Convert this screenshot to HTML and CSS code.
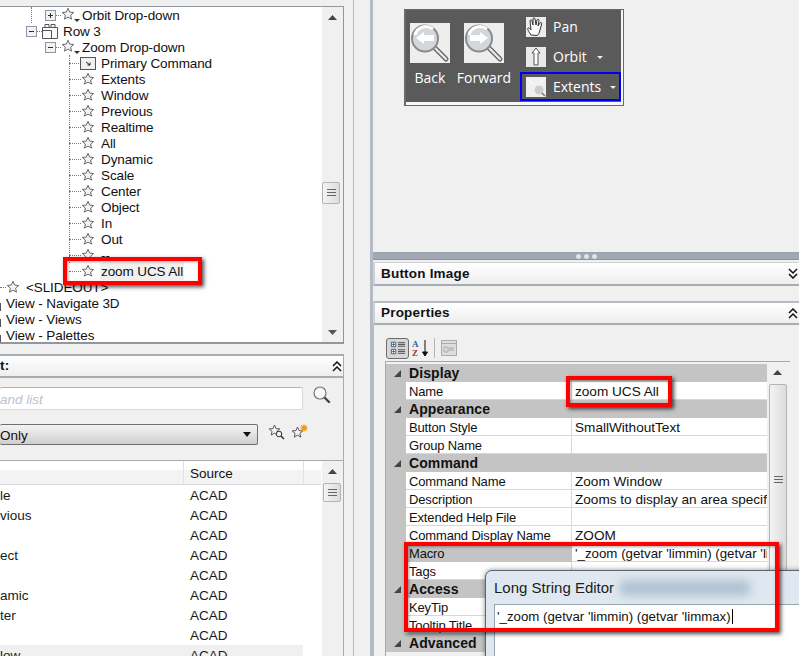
FILE: index.html
```html
<!DOCTYPE html>
<html lang="en">
<head>
<meta charset="utf-8">
<title>Customize User Interface</title>
<link rel="stylesheet" href="styles.css">
</head>
<body>
<svg class="defs" width="0" height="0" aria-hidden="true">
  <defs>
    <symbol id="star" viewBox="0 0 16 16"><path d="M8 1.500l1.900 4.300 4.600.5-3.500 3 1 4.600L8 11.500l-4 2.400 1-4.600-3.500-3 4.600-.5z" fill="#f4f4f4" stroke="#555" stroke-width="1"/></symbol>
    <symbol id="chev-up" viewBox="0 0 10 11"><path d="M1 5l4-4 4 4M1 10l4-4 4 4" fill="none" stroke="#111" stroke-width="1.500"/></symbol>
    <symbol id="chev-down" viewBox="0 0 10 11"><path d="M1 1l4 4 4-4M1 6l4 4 4-4" fill="none" stroke="#111" stroke-width="1.500"/></symbol>
    <symbol id="up" viewBox="0 0 9 5"><path d="M4.500 0L9 5H0z" fill="#444"/></symbol>
    <symbol id="down" viewBox="0 0 9 5"><path d="M0 0h9L4.500 5z" fill="#555"/></symbol>
    <symbol id="grip" viewBox="0 0 9 8"><path d="M0 .5h9M0 3.500h9M0 6.500h9" stroke="#666" stroke-width="1"/></symbol>
    <symbol id="tri" viewBox="0 0 7 7"><path d="M7 0v7H0z" fill="#444"/></symbol>
    <symbol id="plus" viewBox="0 0 11 11"><rect x=".5" y=".5" width="10" height="10" fill="#f2f2f2" stroke="#8a97a8"/><path d="M3 5.500h5M5.500 3v5" stroke="#233"/></symbol>
    <symbol id="minus" viewBox="0 0 11 11"><rect x=".5" y=".5" width="10" height="10" fill="#f2f2f2" stroke="#8a97a8"/><path d="M3 5.500h5" stroke="#233"/></symbol>
    <symbol id="lens" viewBox="0 0 40 40">
      <rect width="40" height="40" fill="#eeeeee"/>
      <path d="M25 25l11 11" stroke="#666" stroke-width="5" stroke-linecap="round"/>
      <path d="M25 25l11 11" stroke="#e8e8e8" stroke-width="2.400" stroke-linecap="round"/>
      <circle cx="15" cy="15.500" r="13" fill="#d3d6da" stroke="#8b8b8b" stroke-width="2"/>
      <path d="M5 12a11 10 0 0 1 18-6" fill="none" stroke="#fff" stroke-width="3"/>
    </symbol>
  </defs>
</svg>

<div class="app">
  <section class="left">
    <div class="left-top"></div>
    <div class="tree">
      <div class="tree-lines">
        <span class="vline vline-a"></span>
        <span class="vline vline-b"></span>
      </div>
      <div class="tree-rows">
        <div class="row lvl3"><svg class="exp"><use href="#plus"/></svg><i class="dash"></i><svg class="star"><use href="#star"/></svg><i class="drop"></i><span class="label">Orbit Drop-down</span></div>
        <div class="row lvl2"><svg class="exp"><use href="#minus"/></svg><i class="dash"></i><svg class="rowicon" viewBox="0 0 16 16"><path d="M.5 4.500h15v11H.5zM.5 7.500h9v8M3 4V1.500h4V4M9 4V1.500h4V4" fill="#fafafa" stroke="#555"/></svg><span class="label">Row 3</span></div>
        <div class="row lvl3"><svg class="exp"><use href="#minus"/></svg><i class="dash"></i><svg class="star"><use href="#star"/></svg><i class="drop"></i><span class="label">Zoom Drop-down</span></div>
        <div class="row lvl4"><i class="dash long"></i><svg class="primary" viewBox="0 0 16 13"><rect x=".5" y=".5" width="15" height="12" fill="#f0f0f0" stroke="#555"/><path d="M6 5l4 3M10 5.500V8H7.500" fill="none" stroke="#222"/></svg><span class="label">Primary Command</span></div>
        <div class="row lvl4"><i class="dash long"></i><svg class="star"><use href="#star"/></svg><span class="label">Extents</span></div>
        <div class="row lvl4"><i class="dash long"></i><svg class="star"><use href="#star"/></svg><span class="label">Window</span></div>
        <div class="row lvl4"><i class="dash long"></i><svg class="star"><use href="#star"/></svg><span class="label">Previous</span></div>
        <div class="row lvl4"><i class="dash long"></i><svg class="star"><use href="#star"/></svg><span class="label">Realtime</span></div>
        <div class="row lvl4"><i class="dash long"></i><svg class="star"><use href="#star"/></svg><span class="label">All</span></div>
        <div class="row lvl4"><i class="dash long"></i><svg class="star"><use href="#star"/></svg><span class="label">Dynamic</span></div>
        <div class="row lvl4"><i class="dash long"></i><svg class="star"><use href="#star"/></svg><span class="label">Scale</span></div>
        <div class="row lvl4"><i class="dash long"></i><svg class="star"><use href="#star"/></svg><span class="label">Center</span></div>
        <div class="row lvl4"><i class="dash long"></i><svg class="star"><use href="#star"/></svg><span class="label">Object</span></div>
        <div class="row lvl4"><i class="dash long"></i><svg class="star"><use href="#star"/></svg><span class="label">In</span></div>
        <div class="row lvl4"><i class="dash long"></i><svg class="star"><use href="#star"/></svg><span class="label">Out</span></div>
        <div class="row lvl4"><i class="dash long"></i><svg class="star"><use href="#star"/></svg><span class="label">--</span></div>
        <div class="row lvl4"><i class="dash long"></i><svg class="star"><use href="#star"/></svg><span class="label sel">zoom UCS All</span></div>
        <div class="row lvl1"><i class="dash"></i><svg class="star"><use href="#star"/></svg><span class="label">&lt;SLIDEOUT&gt;</span></div>
        <div class="row lvl0"><span class="label">View - Navigate 3D</span></div>
        <div class="row lvl0"><span class="label">View - Views</span></div>
        <div class="row lvl0"><span class="label">View - Palettes</span></div>
      </div>
      <div class="scroll tree-scroll">
        <svg class="arrow"><use href="#up"/></svg>
        <div class="thumb tree-thumb"><svg class="grip"><use href="#grip"/></svg></div>
        <svg class="arrow arrow-end"><use href="#down"/></svg>
      </div>
    </div>

    <div class="panel-head head-cmd">
      <span class="head-title cmd-title">t:</span>
      <svg class="chev"><use href="#chev-up"/></svg>
    </div>
    <div class="cmd-body">
      <div class="search-line">
        <div class="search-box">and list</div>
        <svg class="search-icon" viewBox="0 0 18 17"><path d="M11 11l5 5" stroke="#444" stroke-width="2.400" stroke-linecap="round"/><circle cx="7" cy="7" r="6" fill="#f6f8fa" stroke="#777" stroke-width="1.200"/></svg>
      </div>
      <div class="filter-line">
        <div class="select"><span class="select-text">Only</span><i class="select-arrow"></i></div>
        <svg class="tool-star" viewBox="0 0 17 16"><path d="M6.500 1l1.500 3.600 3.800.3-2.900 2.500.9 3.700-3.300-2-3.300 2 .9-3.700L1.200 4.900l3.800-.3z" fill="#f8f8f8" stroke="#555"/><circle cx="11" cy="10" r="2.800" fill="#eef" stroke="#333"/><path d="M13 12l3 3" stroke="#333" stroke-width="1.500"/></svg>
        <svg class="tool-star new" viewBox="0 0 17 16"><path d="M6.500 3l1.500 3.600 3.800.3-2.900 2.500.9 3.700-3.300-2-3.300 2 .9-3.700-2.900-2.500 3.800-.3z" fill="#f8f8f8" stroke="#555"/><path d="M13 .5v7M9.500 4h7M10.500 1.500l5 5M15.500 1.500l-5 5" stroke="#f39a12" stroke-width="1.300"/></svg>
      </div>
      <div class="cmd-list">
        <div class="cmd-main">
          <div class="cmd-head"><span class="h-name"></span><span class="h-src">Source</span></div>
          <div class="cmd-row"><span class="c-name">le</span><span>ACAD</span></div>
          <div class="cmd-row"><span class="c-name">vious</span><span>ACAD</span></div>
          <div class="cmd-row"><span class="c-name"></span><span>ACAD</span></div>
          <div class="cmd-row"><span class="c-name">ect</span><span>ACAD</span></div>
          <div class="cmd-row"><span class="c-name"></span><span>ACAD</span></div>
          <div class="cmd-row"><span class="c-name">amic</span><span>ACAD</span></div>
          <div class="cmd-row"><span class="c-name">ter</span><span>ACAD</span></div>
          <div class="cmd-row"><span class="c-name"></span><span>ACAD</span></div>
          <div class="cmd-row hot"><span class="c-name">low</span><span>ACAD</span></div>
        </div>
        <div class="scroll cmd-scroll">
          <svg class="arrow"><use href="#up"/></svg>
          <div class="thumb cmd-thumb"><svg class="grip"><use href="#grip"/></svg></div>
        </div>
      </div>
    </div>
  </section>

  <div class="gutter"><span class="gutter-line"></span><span class="gutter-bar"></span></div>

  <section class="right">
    <div class="preview-area">
      <div class="ribbon">
        <div class="big big-1"><svg class="big-icon" viewBox="0 0 40 40"><use href="#lens"/><path d="M6 15l8-6v3h10v6H14v3z" fill="#fff"/></svg><span>Back</span></div>
        <div class="big big-2"><svg class="big-icon" viewBox="0 0 40 40"><use href="#lens"/><path d="M24 15l-8-6v3H6v6h10v3z" fill="#fff"/></svg><span>Forward</span></div>
        <div class="small-col">
          <div class="small"><svg class="small-icon" viewBox="0 0 20 20"><rect width="20" height="20" fill="#ededed"/><path d="M5 18c-2-3-4-6-3-7s2 1 3 2L4 4c0-1.500 2-1.500 2 0l1 4 0-6c0-1.500 2-1.500 2 0l1 6 1-5c.4-1.500 2-1 2 .5L12 9l2-3c.8-1 2-.5 1.700.8L14 13c-.5 3-2 5-3 5.500z" fill="#fdfdfd" stroke="#333"/></svg><span>Pan</span></div>
          <div class="small"><svg class="small-icon" viewBox="0 0 20 20"><rect width="20" height="20" fill="#e9e9e9"/><path d="M10 1l4 5h-2v12H8V6H6z" fill="#fafafa" stroke="#555"/></svg><span>Orbit</span><i class="caret"></i></div>
          <div class="small extents"><svg class="small-icon" viewBox="0 0 20 20"><rect width="20" height="20" fill="#efefef"/><path d="M1 1l8 7M19 1l-7 7" stroke="#fff"/><circle cx="13" cy="13" r="4.500" fill="#c9ccd0"/><path d="M16 16l3 3" stroke="#777" stroke-width="1.500"/></svg><span>Extents</span><i class="caret"></i></div>
        </div>
      </div>
    </div>
    <div class="splitter"><i></i><i></i><i></i></div>
    <div class="panel-head head-img">
      <span class="head-title">Button Image</span>
      <svg class="chev"><use href="#chev-down"/></svg>
    </div>
    <div class="panel-head head-props">
      <span class="head-title">Properties</span>
      <svg class="chev"><use href="#chev-up"/></svg>
    </div>
    <div class="props-body">
      <div class="prop-tools">
        <div class="tool-on"><svg class="tool-cat" viewBox="0 0 20 18"><path d="M2.500 2.500h5v5h-5zM2.500 10.500h5v5h-5z" fill="#fff" stroke="#27527f"/><path d="M3.500 5h3M5 3.500v3M3.500 13h3M5 11.500v3M10 3h8M10 5h8M10 7h8M10 11h8M10 13h8M10 15h8" stroke="#444"/></svg></div>
        <svg class="tool-az" viewBox="0 0 16 18"><text class="az-a" x="0" y="8">A</text><text class="az-z" x="0" y="17">Z</text><path d="M13 1v15M10.500 13l2.500 4 2.500-4z" stroke="#111" fill="#111"/></svg>
        <i class="tool-sep"></i>
        <svg class="tool-pages" viewBox="0 0 16 16"><rect x=".5" y=".5" width="15" height="15" fill="#ddd" stroke="#aaa"/><path d="M.5 3.500h15M3 7h4v5H3zM8 8h5M8 10h5" fill="none" stroke="#aaa"/></svg>
      </div>
      <div class="grid-wrap">
        <div class="grid">
          <div class="cat"><svg class="tri"><use href="#tri"/></svg><b>Display</b></div>
          <div class="prop"><span class="p-name">Name</span><span class="p-val">zoom UCS All</span></div>
          <div class="cat"><svg class="tri"><use href="#tri"/></svg><b>Appearance</b></div>
          <div class="prop"><span class="p-name">Button Style</span><span class="p-val">SmallWithoutText</span></div>
          <div class="prop"><span class="p-name">Group Name</span><span class="p-val"></span></div>
          <div class="cat"><svg class="tri"><use href="#tri"/></svg><b>Command</b></div>
          <div class="prop"><span class="p-name">Command Name</span><span class="p-val">Zoom Window</span></div>
          <div class="prop"><span class="p-name">Description</span><span class="p-val">Zooms to display an area specif</span></div>
          <div class="prop"><span class="p-name">Extended Help File</span><span class="p-val"></span></div>
          <div class="prop"><span class="p-name">Command Display Name</span><span class="p-val">ZOOM</span></div>
          <div class="prop active"><span class="p-name">Macro</span><span class="p-val">'_zoom (getvar 'limmin) (getvar 'li</span></div>
          <div class="prop"><span class="p-name">Tags</span><span class="p-val"></span></div>
          <div class="cat"><svg class="tri"><use href="#tri"/></svg><b>Access</b></div>
          <div class="prop"><span class="p-name">KeyTip</span><span class="p-val"></span></div>
          <div class="prop"><span class="p-name">Tooltip Title</span><span class="p-val"></span></div>
          <div class="cat"><svg class="tri"><use href="#tri"/></svg><b>Advanced</b></div>
        </div>
        <div class="scroll grid-scroll">
          <svg class="arrow"><use href="#up"/></svg>
          <div class="thumb grid-thumb"><svg class="grip"><use href="#grip"/></svg></div>
        </div>
      </div>
    </div>
  </section>

  <div class="editor">
    <div class="editor-title"><span>Long String Editor</span><i class="editor-blur"></i></div>
    <div class="editor-text"><span class="editor-value">'_zoom (getvar 'limmin) (getvar 'limmax)</span></div>
  </div>

  <div class="mark mark-tree"></div>
  <div class="mark mark-name"></div>
  <div class="mark mark-macro"></div>
</div>
</body>
</html>
```

FILE: styles.css
```css
* { box-sizing: border-box; }
html, body { margin: 0; padding: 0; }
body { width: 799px; height: 656px; overflow: hidden; background: #f0f0f0; color: #111; font: 13.5px/16px "Liberation Sans", Arial, sans-serif; }
.defs { position: absolute; }
svg { display: block; flex: none; }
i { display: block; flex: none; }

.app { position: relative; display: flex; width: 799px; height: 656px; overflow: hidden; }
.left { width: 344px; flex: none; overflow: hidden; }
.gutter { position: relative; width: 29px; flex: none; }
.gutter-line { position: absolute; left: 9px; top: 0; bottom: 0; width: 1px; background: #b4bcc6; }
.gutter-bar { position: absolute; left: 26px; top: 0; bottom: 0; width: 3px; background: #b4bbc6; }
.right { width: 426px; flex: none; }

/* tree */
.left-top { height: 6px; }
.tree { position: relative; display: flex; height: 338px; background: #fff; border: 1px solid #8f979f; border-width: 1px 1px 2px 0; }
.tree-rows { flex: 1; position: relative; overflow: hidden; }
.tree-lines { position: absolute; inset: 0; }
.vline { position: absolute; width: 0; border-left: 1px dotted #777; }
.vline-a { left: 31px; top: 0; height: 16px; }
.vline-b { left: 69px; top: 48px; height: 208px; }
.row { display: flex; align-items: center; height: 16px; position: relative; white-space: nowrap; }
.lvl0 { padding-left: 6px; }
.lvl0::before { content: ""; position: absolute; left: 0; top: 8px; width: 1px; height: 8px; background: #555; }
.lvl1 { padding-left: 0; }
.lvl2 { padding-left: 26px; }
.lvl3 { padding-left: 45px; }
.lvl4 { padding-left: 69px; }
.exp { width: 11px; height: 11px; }
.dash { width: 5px; height: 0; border-top: 1px dotted #777; }
.dash.long { width: 12px; }
.lvl1 .dash { width: 6px; }
.star { width: 14px; height: 14px; margin-right: 6px; }
.lvl3 .star { margin-right: 0; margin-top: -3px; }
.drop { width: 0; height: 0; border: 3px solid transparent; border-top-color: #333; border-bottom: 0; margin: 11px 2px 0 -1px; }
.rowicon { width: 16px; height: 16px; margin-right: 5px; }
.primary { width: 16px; height: 13px; margin-right: 5px; margin-left: -1px; }
.label { letter-spacing: -.1px; padding-top: 2px; }
.sel { background: #f0f0f0; margin-left: -1px; padding: 2px 1px 0; }

.scroll { width: 21px; flex: none; background: #f0f0f0; position: relative; }
.arrow { width: 9px; height: 5px; position: absolute; left: 6px; top: 8px; }
.arrow-end { top: auto; bottom: 7px; }
.thumb { position: absolute; left: 0; width: 18px; background: linear-gradient(90deg, #f4f4f4, #dcdcdc); border: 1px solid #b4b4b4; border-radius: 2px; display: flex; align-items: center; justify-content: center; }
.grip { width: 9px; height: 8px; }
.tree-thumb { top: 175px; height: 22px; }

/* panel headers */
.panel-head { display: flex; align-items: center; justify-content: space-between; height: 24px; background: linear-gradient(#ffffff, #eeeeee); border: 1px solid #a4acb4; border-width: 1px 1px 2px; }
.head-title { font-weight: bold; font-size: 13.5px; letter-spacing: .2px; padding-left: 6px; }
.chev { width: 10px; height: 11px; margin-right: 1px; }

/* command list */
.head-cmd { margin-top: 10px; border-left: 0; border-top: 2px solid #a4acb4; }
.cmd-title { padding-left: 0; }
.cmd-body { height: 290px; border-right: 1px solid #a4acb4; }
.search-line { display: flex; padding-top: 9px; gap: 10px; height: 33px; }
.search-box { width: 303px; height: 23px; background: #fff; border: 1px solid #d3dae2; border-top-color: #aeb4bb; border-left: 0; font-style: italic; color: #b7c5d4; padding-top: 4px; border-radius: 2px; }
.search-icon { width: 18px; height: 17px; margin-top: -1px; }
.filter-line { display: flex; gap: 6px; height: 50px; padding-top: 13px; }
.select { width: 258px; height: 21px; display: flex; align-items: center; justify-content: space-between; background: linear-gradient(#f4f4f4, #cfcfcf); border: 1px solid #707070; border-left: 0; border-radius: 2px; }
.select-text { padding-top: 2px; }
.select-arrow { width: 0; height: 0; border-style: solid; border-color: #111 transparent transparent; border-width: 5px 4.500px 0; margin-right: 6px; }
.tool-star { width: 17px; height: 16px; margin-left: 4px; }
.tool-star.new { margin-left: 0; }
.cmd-list { display: flex; border-top: 1px solid #a4acb4; height: 197px; background: #fff; margin-top: -1px; }
.cmd-main { flex: 1; overflow: hidden; }
.cmd-head { display: flex; height: 24px; width: 321px; background: linear-gradient(#ffffff 40%, #f3f3f3 40%); border-bottom: 1px solid #d7dde3; }
.h-name { width: 184px; border-right: 1px solid #e2e2e2; }
.h-src { width: 120px; border-right: 1px solid #e2e2e2; padding: 5px 0 0 6px; }
.cmd-row { display: flex; height: 20px; align-items: center; width: 303px; color: #1a1a1a; padding-top: 2px; }
.hot { background: #f0f0f0; }
.c-name { width: 190px; flex: none; white-space: nowrap; }
.cmd-thumb { top: 22px; height: 19px; left: 1px; }

/* right column */
.preview-area { height: 253px; padding: 9px 0 0 31px; border-bottom: 1px solid #9aa2aa; }
.ribbon { display: flex; width: 220px; height: 97px; background: #5a5a5a; border: 1px solid #6a6a6a; border-width: 1px 1px 1px 2px; box-shadow: inset -2px -3px 0 #f7f7f7; color: #fff; font: 14px/16px "Open Sans", sans-serif; }
.big { display: flex; flex-direction: column; align-items: center; padding-top: 13px; }
.big-1 { width: 48px; }
.big-2 { width: 60px; }
.big-icon { width: 40px; height: 40px; margin-bottom: 7px; }
.small-col { display: flex; flex-direction: column; margin-left: 6px; padding-top: 2px; }
.small { display: flex; align-items: center; height: 30px; padding-left: 6px; gap: 7px; position: relative; width: 101px; }
.small-icon { width: 20px; height: 20px; }
.extents { height: 29px; border: 2px solid #0000f0; padding-left: 4px; }
.caret { position: absolute; width: 0; height: 0; border: 3px solid transparent; border-top: 3px solid #eee; border-bottom: 0; left: 77px; top: 14px; }
.extents .caret { left: 88px; top: 12px; }
.splitter { display: flex; justify-content: center; align-items: center; gap: 3px; height: 7px; background: #a1a7b3; border-bottom: 1px solid #8f949c; }
.splitter i { width: 5px; height: 5px; border-radius: 50%; background: #dfe2e8; }
.head-img { margin-top: 2px; border-right: 0; border-left: 2px solid #cfd3d8; border-top: 1px solid #cfd3d8; }
.head-props { margin-top: 15px; border-right: 0; border-left: 2px solid #cfd3d8; border-top: 2px solid #b4bbc2; }
.props-body { padding: 11px 0 0 11px; border-left: 1px solid #b4bbc2; height: 340px; }
.prop-tools { display: flex; align-items: center; height: 24px; gap: 3px; padding-left: 1px; }
.tool-on { width: 23px; height: 21px; border: 1px solid #6c6c6c; border-radius: 3px; background: #d7d7d7; display: flex; align-items: center; justify-content: center; }
.tool-cat { width: 18px; height: 16px; }
.tool-az { width: 16px; height: 18px; }
.az-a { font: bold 9px "Liberation Serif", serif; fill: #2a5fa8; }
.az-z { font: bold 9px "Liberation Serif", serif; fill: #a83030; }
.tool-sep { width: 1px; height: 20px; background: #b4b4b4; margin: 0 3px; }
.tool-pages { width: 16px; height: 16px; }
.grid-wrap { display: flex; margin-top: 1px; border-top: 1px solid #a8a8a8; border-left: 1px solid #a8a8a8; width: 405px; }
.grid { width: 381px; flex: none; font-size: 13px; letter-spacing: -.15px; padding-top: 2px; }
.cat { display: flex; align-items: center; height: 18px; background: #c4c4c4; }
.tri { width: 7px; height: 7px; margin: 0 0 0 8px; }
.cat b { margin-left: 8px; font-size: 14px; letter-spacing: .1px; }
.prop { display: flex; height: 18px; background: #c4c4c4; padding-left: 20px; overflow: hidden; }
.p-name { width: 166px; flex: none; background: #fff; border-bottom: 1px solid #d8d8d8; border-right: 1px solid #d8d8d8; padding-left: 3px; white-space: nowrap; line-height: 19px; }
.p-val { flex: 1; background: #fff; border-bottom: 1px solid #d8d8d8; padding-left: 3px; white-space: nowrap; overflow: hidden; line-height: 19px; font-size: 13.6px; letter-spacing: 0; }
.active .p-name { background: #c4c4c4; border-color: #c4c4c4; }
.active .p-val { font-size: 13.3px; }
.grid-scroll { width: 22px; height: 300px; }
.grid-thumb { top: 22px; height: 192px; left: 2px; }

/* long string editor window */
.editor { position: absolute; left: 485px; top: 570px; width: 330px; height: 100px; background: #dfe8f0; border: 1px solid #5c6670; border-radius: 7px 0 0 0; box-shadow: 0 0 5px rgba(0,0,0,.45); padding-left: 8px; }
.editor-title { display: flex; align-items: center; height: 33px; font-size: 15px; gap: 6px; color: #1c1c1c; }
.editor-blur { width: 130px; height: 16px; background: #b2c3d3; filter: blur(4px); }
.editor-text { height: 70px; background: #fff; border: 1px solid #9aa4ae; padding: 4px 0 0 2px; font-size: 13.25px; }
.editor-value { border-right: 1px solid #000; padding-right: 1px; }

/* red call-outs */
.mark { position: absolute; border: 4px solid #f00; box-shadow: 2px 2px 4px rgba(0,0,0,.7), inset 1px 1px 3px rgba(0,0,0,.35); }
.mark-tree { left: 63px; top: 257px; width: 139px; height: 28px; }
.mark-name { left: 566px; top: 376px; width: 106px; height: 31px; }
.mark-macro { left: 404px; top: 542px; width: 375px; height: 90px; }
```
